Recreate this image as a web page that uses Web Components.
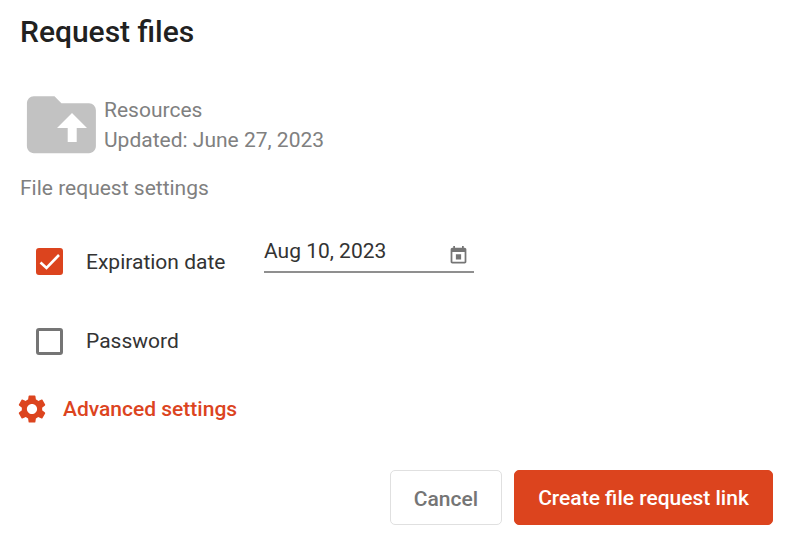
<!DOCTYPE html>
<html>
<head>
<meta charset="utf-8">
<title>Request files</title>
<style>
  html, body { margin: 0; background: #fff; }
  body { font-family: Roboto, "Liberation Sans", sans-serif; }
</style>
</head>
<body>
<rf-dialog>
  <span slot="title">Request files</span>
  <rf-folder name="Resources" updated="Updated: June 27, 2023"></rf-folder>
  <rf-section>File request settings</rf-section>
  <rf-option checked label="Expiration date"><rf-date value="Aug 10, 2023"></rf-date></rf-option>
  <rf-option label="Password"></rf-option>
  <rf-advanced>Advanced settings</rf-advanced>
  <rf-button slot="actions">Cancel</rf-button>
  <rf-button slot="actions" primary>Create file request link</rf-button>
</rf-dialog>

<script>
class RfDialog extends HTMLElement {
  constructor() {
    super()
    this.attachShadow({ mode: 'open' })
    this.shadowRoot.innerHTML = `
      <style>
        :host { display: block; width: 796px; height: 539px; box-sizing: border-box; padding: 14px 23px 0 20px; overflow: hidden; }
        h1 { margin: 0 0 32px; font: 500 30px/36px Roboto, sans-serif; color: #212121; }
        footer { display: flex; justify-content: flex-end; gap: 12px; margin-top: 44px; }
      </style>
      <h1><slot name="title"></slot></h1>
      <slot></slot>
      <footer><slot name="actions"></slot></footer>
    `
  }
}

class RfFolder extends HTMLElement {
  constructor() {
    super()
    this.attachShadow({ mode: 'open' })
    this.shadowRoot.innerHTML = `
      <style>
        :host { display: flex; align-items: flex-start; gap: 1px; height: 83px; }
        svg { flex: none; display: block; }
        .text { padding-top: 13px; font: 400 21px/30px Roboto, sans-serif; color: #808080; }
      </style>
      <svg width="83" height="83" viewBox="0 0 83 83">
        <path transform="scale(3.45 3.56)" fill="#c2c2c2" d="M20 6h-8l-2-2H4c-1.1 0-1.99.9-1.99 2L2 18c0 1.1.9 2 2 2h16c1.1 0 2-.9 2-2V8c0-1.1-.9-2-2-2z"/>
        <path fill="#fff" d="M52 31 67 46H56.7V60H47.7V46H37z"/>
      </svg>
      <div class="text"><div id="name"></div><div id="updated"></div></div>
    `
  }
  connectedCallback() {
    this.shadowRoot.querySelector('#name').textContent = this.getAttribute('name')
    this.shadowRoot.querySelector('#updated').textContent = this.getAttribute('updated')
  }
}

class RfSection extends HTMLElement {
  constructor() {
    super()
    this.attachShadow({ mode: 'open' })
    this.shadowRoot.innerHTML = `
      <style>
        :host { display: block; margin: 8px 0 18px; font: 400 21px/30px Roboto, sans-serif; color: #808080; }
      </style>
      <slot></slot>
    `
  }
}

class RfOption extends HTMLElement {
  constructor() {
    super()
    this.attachShadow({ mode: 'open' })
    this.shadowRoot.innerHTML = `
      <style>
        :host { display: flex; align-items: center; height: 80px; padding-left: 16px; font: 400 21px/30px Roboto, sans-serif; color: #333; }
        .box { flex: none; box-sizing: border-box; width: 27px; height: 27px; border: 3px solid #757575; border-radius: 3px; }
        .box svg { display: none; }
        :host([checked]) .box { background: #dc441e; border-color: #dc441e; }
        :host([checked]) .box svg { display: block; margin: -3px; }
        :host([checked]) label { padding-top: 2px; }
        label { margin-left: 23px; width: 178px; flex: none; }
      </style>
      <div class="box">
        <svg width="27" height="27" viewBox="0 0 27 27"><path d="M4.5 14.5 10.5 20 23 7" fill="none" stroke="#fff" stroke-width="2.6"/></svg>
      </div>
      <label></label>
      <slot></slot>
    `
  }
  connectedCallback() {
    this.shadowRoot.querySelector('label').textContent = this.getAttribute('label')
  }
}

class RfDate extends HTMLElement {
  constructor() {
    super()
    this.attachShadow({ mode: 'open' })
    this.shadowRoot.innerHTML = `
      <style>
        :host { display: flex; justify-content: space-between; box-sizing: border-box; width: 210px; height: 35px; margin-top: -11px; border-bottom: 2px solid #8f8f8f; font: 400 21px/30px Roboto, sans-serif; color: #333; }
        span { display: block; margin-top: -2px; }
        svg { display: block; margin: 7px 5px 0 0; }
      </style>
      <span></span>
      <svg width="21" height="21" viewBox="0 0 24 24">
        <path fill="#757575" d="M19 3h-1V1h-2v2H8V1H6v2H5c-1.11 0-1.99.9-1.99 2L3 19c0 1.1.89 2 2 2h14c1.1 0 2-.9 2-2V5c0-1.1-.9-2-2-2zm0 16H5V8h14v11zM9 10.5h6v6H9z"/>
      </svg>
    `
  }
  connectedCallback() {
    this.shadowRoot.querySelector('span').textContent = this.getAttribute('value')
  }
}

class RfAdvanced extends HTMLElement {
  constructor() {
    super()
    this.attachShadow({ mode: 'open' })
    this.shadowRoot.innerHTML = `
      <style>
        :host { display: flex; align-items: center; gap: 14px; height: 34px; margin: 11px 0 0 -5px; font: 500 21px/30px Roboto, sans-serif; color: #dc441e; }
        svg { display: block; flex: none; }
      </style>
      <svg width="34" height="34" viewBox="0 0 24 24">
        <path fill="#dc441e" d="M19.14 12.94c.04-.3.06-.61.06-.94 0-.32-.02-.64-.07-.94l2.03-1.58c.18-.14.23-.41.12-.61l-1.92-3.32c-.12-.22-.37-.29-.59-.22l-2.39.96c-.5-.38-1.03-.7-1.62-.94l-.36-2.54c-.04-.24-.24-.41-.48-.41h-3.84c-.24 0-.43.17-.47.41l-.36 2.54c-.59.24-1.13.57-1.62.94l-2.39-.96c-.22-.08-.47 0-.59.22L2.74 8.87c-.12.21-.08.47.12.61l2.03 1.58c-.05.3-.09.63-.09.94s.02.64.07.94l-2.03 1.58c-.18.14-.23.41-.12.61l1.92 3.32c.12.22.37.29.59.22l2.39-.96c.5.38 1.03.7 1.62.94l.36 2.54c.05.24.24.41.48.41h3.84c.24 0 .44-.17.47-.41l.36-2.54c.59-.24 1.13-.56 1.62-.94l2.39.96c.22.08.47 0 .59-.22l1.92-3.32c.12-.22.07-.47-.12-.61l-2.01-1.58zM12 15.6c-1.98 0-3.6-1.62-3.6-3.6s1.62-3.6 3.6-3.6 3.6 1.62 3.6 3.6-1.62 3.6-3.6 3.6z"/>
      </svg>
      <slot></slot>
    `
  }
}

class RfButton extends HTMLElement {
  constructor() {
    super()
    this.attachShadow({ mode: 'open' })
    this.shadowRoot.innerHTML = `
      <style>
        :host { display: flex; align-items: center; justify-content: center; box-sizing: border-box; height: 55px; width: 112px; padding-top: 2px; border: 1px solid #e0e0e0; border-radius: 5px; font: 500 21px/30px Roboto, sans-serif; color: #757575; }
        :host([primary]) { width: 259px; padding-top: 0; background: #dc441e; border-color: #dc441e; color: #fff; }
      </style>
      <slot></slot>
    `
  }
}

customElements.define('rf-dialog', RfDialog)
customElements.define('rf-folder', RfFolder)
customElements.define('rf-section', RfSection)
customElements.define('rf-option', RfOption)
customElements.define('rf-date', RfDate)
customElements.define('rf-advanced', RfAdvanced)
customElements.define('rf-button', RfButton)
</script>
</body>
</html>
